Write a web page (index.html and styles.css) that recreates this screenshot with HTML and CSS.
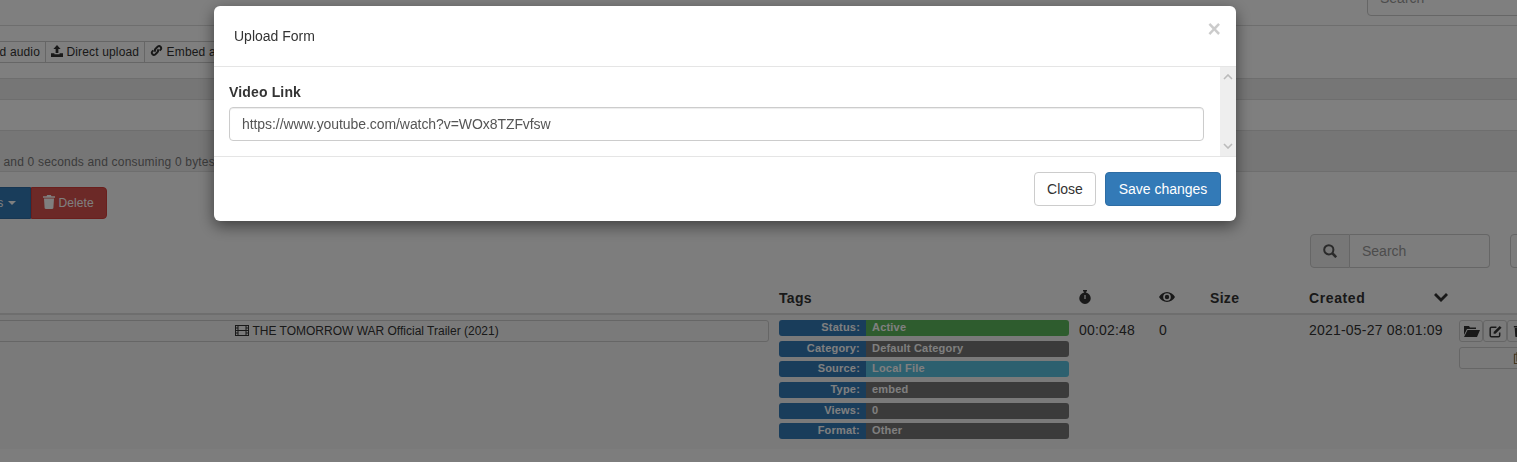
FILE: index.html
```html
<!DOCTYPE html>
<html lang="en">
<head>
<meta charset="utf-8">
<title>Upload Form</title>
<link rel="stylesheet" href="styles.css">
</head>
<body>
<svg class="sprites" width="0" height="0" aria-hidden="true">
  <symbol id="i-upload" viewBox="0 0 14 14"><path d="M7 0l4.200 4.600H8.600v4.600H5.400V4.600H2.800zM0 9.500h4v1.400h6V9.500h4V14H0z"/></symbol>
  <symbol id="i-link" viewBox="0 0 14 14"><path fill="none" stroke="currentColor" stroke-width="2.100" d="M6 8.200a2.200 2.200 0 0 1 0-3.100l2.400-2.400a2.300 2.300 0 0 1 3.200 3.200l-1.200 1.200M8 5.800a2.200 2.200 0 0 1 0 3.100l-2.400 2.400a2.300 2.300 0 0 1-3.200-3.200l1.200-1.200"/></symbol>
  <symbol id="i-trash" viewBox="0 0 12 14"><path d="M4.200 0h3.600l.7 1.200H12v1.600H0V1.200h3.500zM1 3.600h10l-.6 9.200c0 .7-.5 1.200-1.200 1.200H2.800c-.7 0-1.200-.5-1.200-1.200z"/></symbol>
  <symbol id="i-search" viewBox="0 0 14 14"><path fill="none" stroke="currentColor" stroke-width="2" d="M5.800 1.200a4.600 4.600 0 1 0 0 9.200 4.600 4.600 0 0 0 0-9.200z"/><path fill="none" stroke="currentColor" stroke-width="2.600" d="M9.200 9.200l4 4"/></symbol>
  <symbol id="i-stopwatch" viewBox="0 0 12 14"><path d="M4 0h4v1.400H6.900v1.200a5.700 5.700 0 1 1-1.800 0V1.400H4zM5.400 5v4h1.200V5z" fill-rule="evenodd"/></symbol>
  <symbol id="i-eye" viewBox="0 0 16 10"><path fill-rule="evenodd" d="M8 0c3.600 0 6.400 2.400 8 5-1.600 2.600-4.400 5-8 5S1.600 7.600 0 5c1.600-2.600 4.400-5 8-5zm0 1.200a3.800 3.800 0 1 0 0 7.600 3.800 3.800 0 0 0 0-7.600zM8 2.800a2.200 2.200 0 1 1 0 4.400 2.200 2.200 0 0 1 0-4.400z"/></symbol>
  <symbol id="i-chevron" viewBox="0 0 14 9"><path d="M2 0l5 5 5-5 2 2-7 7-7-7z"/></symbol>
  <symbol id="i-film" viewBox="0 0 14 11"><path fill-rule="evenodd" d="M0 0h14v11H0zm1 1v1.500h1.500V1zm0 2.500V5h1.500V3.500zM1 6v1.500h1.500V6zm0 2.500V10h1.500V8.500zM11.500 1v1.500H13V1zm0 2.500V5H13V3.500zm0 2.500v1.500H13V6zm0 2.500V10H13V8.500zM3.500 1v4h7V1zm0 5v4h7V6z"/></symbol>
  <symbol id="i-folder" viewBox="0 0 16 12"><path d="M0 1h5l1 1.500h6V4H3L0 10zM3.500 5H16l-3 7H0z"/></symbol>
  <symbol id="i-edit" viewBox="0 0 14 14"><path fill="none" stroke="currentColor" stroke-width="1.600" d="M11.500 8v3.400c0 .8-.5 1.300-1.300 1.300H2.600c-.8 0-1.300-.5-1.300-1.300V3.800c0-.8.500-1.300 1.300-1.300H8"/><path d="M5 9.500V7.500L11.500 1 13.500 3 7 9.500z"/></symbol>
  <symbol id="i-copy" viewBox="0 0 12 14"><path fill-rule="evenodd" d="M0 2h3V0h5l4 4v7H9v3H0zm1.200 1.200v9.600h6.600V11H3V3.200zM4.200 1.200v8.600h6.600V5H7V1.200z"/></symbol>
</svg>

<div class="page">
  <section class="band band-search">
    <div class="input-stub top-search">Search</div>
  </section>
  <section class="band band-tools">
    <div class="toolbar">
      <span class="tool tool-audio">Upload audio</span>
      <span class="tool"><svg class="ico ico-12"><use href="#i-upload"/></svg> Direct upload</span>
      <span class="tool"><svg class="ico ico-13"><use href="#i-link"/></svg> Embed a video</span>
    </div>
  </section>
  <section class="band band-dark band-thin"></section>
  <section class="band band-plain"></section>
  <section class="band band-dark band-stats">
    <p class="stats">You have 1 video totalling 0 hours, 2 minutes and 0 seconds and consuming 0 bytes</p>
  </section>
  <section class="content">
    <div class="actions">
      <span class="btn-main">Actions <i class="caret"></i></span>
      <span class="btn-delete"><svg class="ico ico-12"><use href="#i-trash"/></svg> Delete</span>
    </div>
    <div class="filters">
      <div class="search-group">
        <span class="search-addon"><svg class="ico ico-14"><use href="#i-search"/></svg></span>
        <span class="search-input">Search</span>
      </div>
      <div class="filter-stub"></div>
    </div>
    <div class="table-wrap">
      <div class="thead">
        <div class="c-title"></div>
        <div class="c-tags">Tags</div>
        <div class="c-dur"><svg class="ico ico-watch"><use href="#i-stopwatch"/></svg></div>
        <div class="c-views"><svg class="ico ico-eye"><use href="#i-eye"/></svg></div>
        <div class="c-size">Size</div>
        <div class="c-created">Created<svg class="ico ico-chevron"><use href="#i-chevron"/></svg></div>
      </div>
      <div class="tbody">
        <div class="c-title"><div class="title-box"><svg class="ico ico-film"><use href="#i-film"/></svg> THE TOMORROW WAR Official Trailer (2021)</div></div>
        <div class="c-tags tags">
          <div class="tag tag-a"><b>Status:</b><em class="ok">Active</em></div>
          <div class="tag tag-b"><b>Category:</b><em>Default Category</em></div>
          <div class="tag tag-b"><b>Source:</b><em class="info">Local File</em></div>
          <div class="tag tag-b"><b>Type:</b><em>embed</em></div>
          <div class="tag tag-a"><b>Views:</b><em>0</em></div>
          <div class="tag tag-b"><b>Format:</b><em>Other</em></div>
        </div>
        <div class="c-dur">00:02:48</div>
        <div class="c-views">0</div>
        <div class="c-size"></div>
        <div class="c-created">2021-05-27 08:01:09</div>
        <div class="c-actions">
          <div class="row-btns">
            <span class="mini"><svg class="ico ico-folder"><use href="#i-folder"/></svg></span>
            <span class="mini"><svg class="ico ico-13"><use href="#i-edit"/></svg></span>
            <span class="mini"><svg class="ico ico-12"><use href="#i-trash"/></svg></span>
          </div>
          <div class="wide-btn"><svg class="ico ico-12"><use href="#i-copy"/></svg></div>
        </div>
      </div>
    </div>
  </section>
</div>

<div class="backdrop"></div>

<div class="modal-layer">
  <div class="modal">
    <header class="modal-header">
      <h4 class="modal-title">Upload Form</h4>
      <span class="modal-x">×</span>
    </header>
    <div class="modal-body">
      <div class="modal-scroll">
        <label class="field-label" for="video-link">Video Link</label>
        <input id="video-link" class="field" type="text" value="https://www.youtube.com/watch?v=WOx8TZFvfsw">
      </div>
      <div class="scrollbar">
        <svg class="sb-arrow" viewBox="0 0 10 6"><path d="M1 5l4-4 4 4" fill="none" stroke="currentColor" stroke-width="1.600"/></svg>
        <svg class="sb-arrow" viewBox="0 0 10 6"><path d="M1 1l4 4 4-4" fill="none" stroke="currentColor" stroke-width="1.600"/></svg>
      </div>
    </div>
    <footer class="modal-footer">
      <button class="btn btn-default" type="button">Close</button>
      <button class="btn btn-primary" type="button">Save changes</button>
    </footer>
  </div>
</div>
</body>
</html>
```
FILE: styles.css
```css
* { box-sizing: border-box; }
html, body { margin: 0; height: 462px; overflow: hidden; }
body { font-family: "Liberation Sans", Arial, sans-serif; font-size: 14px; color: #333; background: #fff; }
.sprites { position: absolute; }
.ico { fill: currentColor; display: inline-block; vertical-align: -1px; }
.ico-14 { width: 14px; height: 14px; }
.ico-13 { width: 13px; height: 13px; }
.ico-12 { width: 12px; height: 12px; }
.ico-watch { width: 12px; height: 14px; vertical-align: -1px; }
.ico-eye { width: 16px; height: 10px; vertical-align: 1px; }
.ico-chevron { width: 14px; height: 9px; }
.ico-film { width: 14px; height: 11px; }
.ico-folder { width: 16px; height: 12px; margin-left: 2px; }

.page { height: 462px; overflow: hidden; }
.band { border-bottom: 1px solid #ddd; }
.band-dark { background: #ededed; }
.band-search { height: 26px; display: flex; justify-content: flex-end; }
.input-stub { width: 160px; height: 34px; margin-top: -18px; margin-right: -10px; border: 1px solid #ccc; border-radius: 4px; padding: 7px 12px; color: #999; }
.band-tools { height: 53px; padding-top: 15px; }
.toolbar { display: flex; height: 22px; margin-left: -45px; font-size: 12px; line-height: 20px; letter-spacing: .15px; }
.tool { border: 1px solid #ccc; background: #fff; padding: 0 5px; margin-left: -1px; white-space: nowrap; color: #333; }
.tool-audio { width: 92px; text-align: right; }
.band-thin { height: 21px; }
.band-plain { height: 31px; }
.band-stats { height: 41px; }
.stats { margin: 0 0 0 -247px; height: 40px; line-height: 20px; padding-top: 21px; font-size: 12px; color: #777; letter-spacing: .19px; white-space: nowrap; }

.content { height: 290px; padding-top: 15px; background: #fbfbfb; }
.actions { display: flex; height: 32px; margin-left: -60px; color: #fff; font-size: 12px; line-height: 30px; }
.btn-main { width: 91px; background: #337ab7; border: 1px solid #2e6da4; border-radius: 4px 0 0 4px; padding-left: 23px; white-space: nowrap; overflow: hidden; }
.caret { display: inline-block; border-top: 4px solid #fff; border-left: 4px solid transparent; border-right: 4px solid transparent; vertical-align: 2px; margin-left: 1px; }
.btn-delete { width: 76px; background: #d9534f; border: 1px solid #d43f3a; border-radius: 0 4px 4px 0; padding-left: 11px; letter-spacing: .1px; }
.btn-delete .ico { width: 12px; height: 14px; vertical-align: -2px; }

.filters { display: flex; justify-content: flex-end; margin-top: 15px; height: 34px; margin-right: -30px; gap: 20px; }
.search-group { display: flex; width: 180px; height: 34px; }
.search-addon { width: 40px; background: #eee; border: 1px solid #ccc; border-radius: 4px 0 0 4px; display: flex; align-items: center; justify-content: center; color: #555; }
.search-input { flex: 1; border: 1px solid #ccc; border-left: 0; border-radius: 0 4px 4px 0; padding: 8px 12px; color: #999; }
.filter-stub { width: 37px; border: 1px solid #ccc; border-radius: 4px; }

.table-wrap { margin-top: 20px; }
.thead, .tbody { display: flex; }
.thead { height: 27px; border-bottom: 2px solid #ddd; font-weight: 700; letter-spacing: .3px; line-height: 20px; }
.tbody { padding-top: 5px; height: 134px; background: #f5f5f5; }
.c-title { width: 779px; flex: none; padding-right: 10px; }
.c-tags { width: 300px; flex: none; padding-right: 10px; }
.c-dur { width: 80px; flex: none; }
.c-views { width: 51px; flex: none; }
.c-size { width: 99px; flex: none; }
.c-created { width: 150px; flex: none; display: flex; justify-content: space-between; letter-spacing: .6px; }
.c-created .ico { margin: 5px 11px 0 0; }
.tbody .c-dur, .tbody .c-views, .tbody .c-created { line-height: 20px; letter-spacing: .2px; }
.title-box { height: 22px; border: 1px solid #ccc; border-radius: 3px; text-align: center; font-size: 12px; line-height: 20px; margin-left: -35px; white-space: nowrap; }

.tag { display: flex; height: 16px; margin-bottom: 4.7px; font-size: 11px; line-height: 15px; font-weight: 700; border-radius: 3px; overflow: hidden; letter-spacing: .2px; color: #fff; }
.tag b { width: 87px; background: #337ab7; text-align: right; padding-right: 6px; flex: none; }
.tag em { flex: 1; background: #777; font-style: normal; padding-left: 6px; }
.tag em.ok { background: #5cb85c; }
.tag em.info { background: #5bc0de; }

.c-actions { width: 80px; flex: none; }
.row-btns { display: flex; }
.mini { width: 24px; height: 22px; border: 1px solid #ccc; border-radius: 3px; display: flex; align-items: center; justify-content: center; color: #333; }
.wide-btn { margin-top: 5px; width: 120px; height: 22px; border: 1px solid #ccc; border-radius: 3px; display: flex; align-items: center; justify-content: center; color: #8a6d3b; }

.backdrop { position: fixed; inset: 0; background: rgba(0, 0, 0, .5); }
.modal-layer { position: fixed; inset: 0; }
.modal { width: 1022px; height: 215px; margin: 6px 0 0 214px; background: #fff; border-radius: 6px; box-shadow: 0 5px 15px rgba(0, 0, 0, .5); display: flex; flex-direction: column; overflow: hidden; }
.modal-header { height: 61px; flex: none; border-bottom: 1px solid #e5e5e5; padding: 20px 15px 0 20px; display: flex; justify-content: space-between; }
.modal-title { margin: 0; font-size: 14px; font-weight: 400; line-height: 20px; }
.modal-x { font-size: 23px; font-weight: 700; line-height: 1; color: #000; opacity: .2; margin-top: -8px; }
.modal-body { height: 89px; flex: none; display: flex; }
.modal-scroll { flex: 1; padding: 15px 16px 0 15px; }
.field-label { display: block; font-weight: 700; letter-spacing: .15px; line-height: 20px; margin-bottom: 5px; }
.field { display: block; width: 100%; height: 34px; border: 1px solid #ccc; border-radius: 4px; padding: 6px 12px; font: 14px "Liberation Sans", Arial, sans-serif; letter-spacing: -.07px; color: #555; box-shadow: inset 0 1px 1px rgba(0, 0, 0, .075); }
.scrollbar { width: 16px; flex: none; background: #eee; display: flex; flex-direction: column; justify-content: space-between; align-items: center; padding: 7px 0; color: #bbb; }
.sb-arrow { width: 10px; height: 6px; }
.modal-footer { flex: 1; border-top: 1px solid #e5e5e5; display: flex; justify-content: flex-end; gap: 9px; padding: 15px 15px 0 0; }
.btn { height: 34px; border: 1px solid; border-radius: 4px; padding: 6px 0; font: 14px/20px "Liberation Sans", Arial, sans-serif; }
.btn-default { width: 62px; background: #fff; border-color: #ccc; color: #333; }
.btn-primary { width: 116px; background: #337ab7; border-color: #2e6da4; color: #fff; }
```
